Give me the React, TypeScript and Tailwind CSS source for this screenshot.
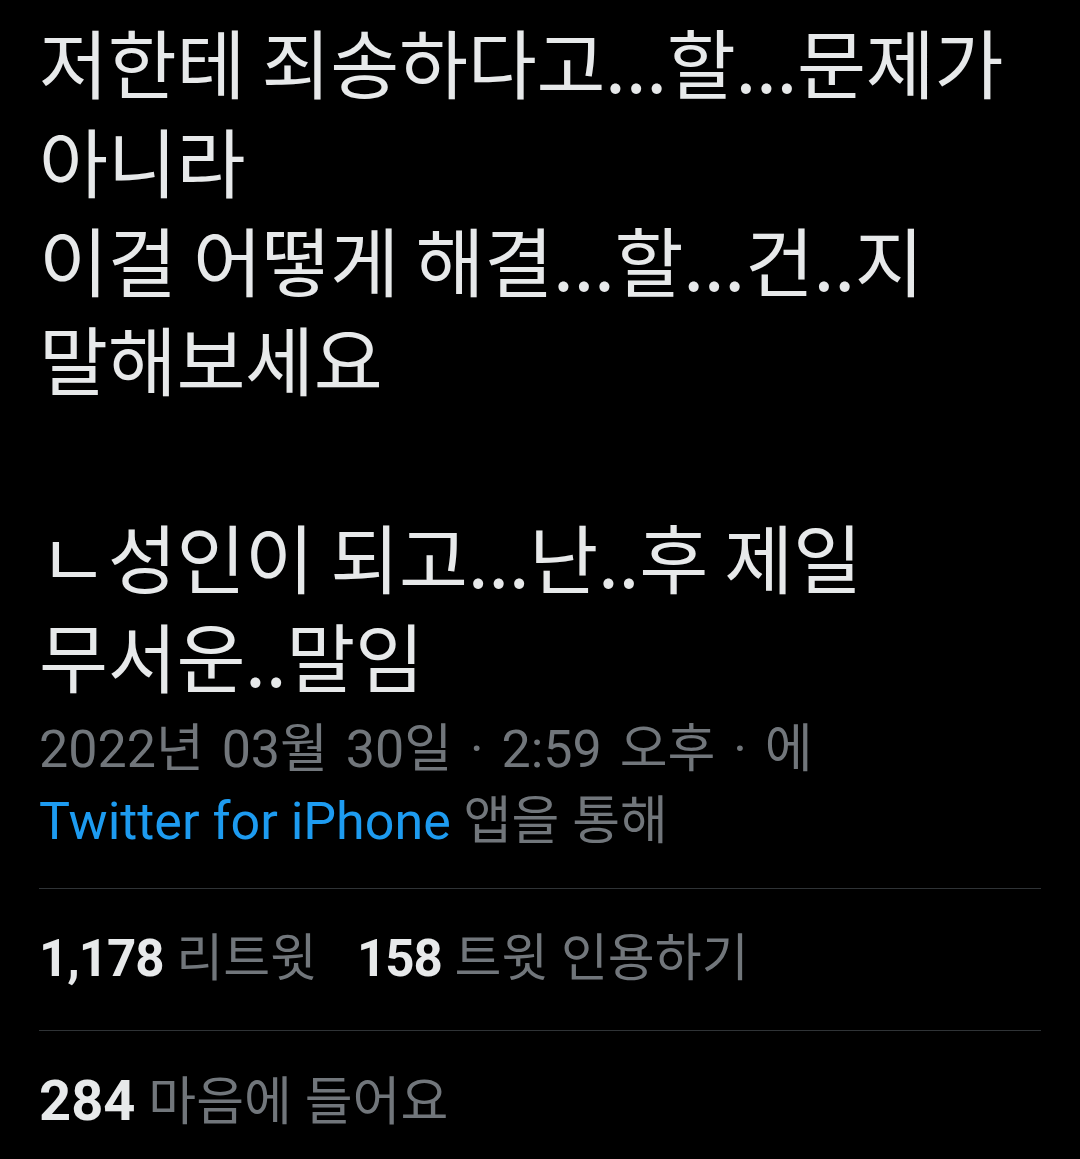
const bodyLines = [
  "저한테 죄송하다고...할...문제가",
  "아니라",
  "이걸 어떻게 해결...할...건..지",
  "말해보세요",
  "",
  "ㄴ성인이 되고...난..후 제일",
  "무서운..말임",
];

const meta = "font-['Roboto','Noto_Sans_CJK_KR',sans-serif]";

export default function App() {
  return (
    <div className="min-h-[1159px] w-[1080px] bg-black px-[39px] pt-[11px]">
      <div className="font-['Noto_Sans_CJK_KR',sans-serif] text-[75px] leading-[99px] tracking-[-0.3px] text-[#e7e9ea]">
        {bodyLines.map((line, i) => (
          <div key={i} className="h-[99px] whitespace-nowrap">
            {line}
          </div>
        ))}
      </div>

      <div className={`${meta} mt-[10px] text-[52px] leading-[72px] text-[#71767b]`}>
        <div className="whitespace-nowrap [word-spacing:5px]">2022년 03월 30일 · 2:59 오후 · 에</div>
        <div className="whitespace-nowrap">
          <span className="text-[#1d9bf0]">Twitter for iPhone</span> 앱을 통해
        </div>
      </div>

      <div className={`${meta} mt-[30px] border-t border-[#2f3336]`}>
        <div className="flex h-[141px] items-center gap-[40px]">
          <span className="text-[51px]">
            <b className="text-[51px] font-bold tracking-[-1px] text-[#e7e9ea]">1,178</b>{" "}
            <span className="text-[#71767b]">리트윗</span>
          </span>
          <span className="text-[51px]">
            <b className="text-[51px] font-bold tracking-[-1px] text-[#e7e9ea]">158</b>{" "}
            <span className="text-[#71767b]">트윗 인용하기</span>
          </span>
        </div>
        <div className="flex h-[141px] items-center border-t border-[#2f3336]">
          <span className="text-[52px]">
            <b className="text-[56px] font-bold text-[#e7e9ea]">284</b>{" "}
            <span className="text-[#71767b]">마음에 들어요</span>
          </span>
        </div>
      </div>
    </div>
  );
}
